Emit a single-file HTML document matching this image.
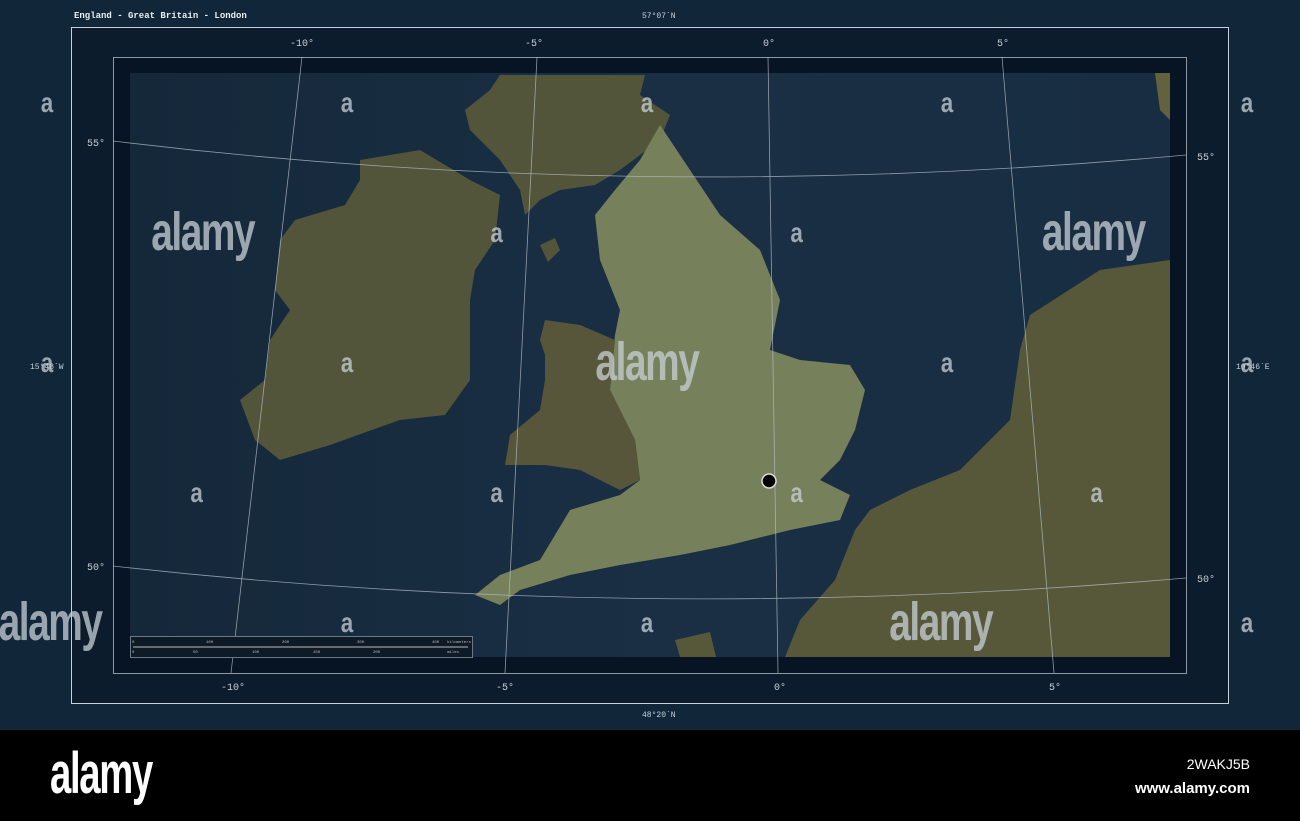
<!DOCTYPE html>
<html><head><meta charset="utf-8"><style>
html,body{margin:0;padding:0;width:1300px;height:821px;overflow:hidden;background:#12263a;font-family:"Liberation Mono",monospace}
svg{position:absolute;left:0;top:0}
</style></head><body>
<svg width="1300" height="821" viewBox="0 0 1300 821" xmlns="http://www.w3.org/2000/svg">
<defs>
<linearGradient id="sea" x1="0" y1="0" x2="1" y2="0"><stop offset="0" stop-color="#15283a"/><stop offset="0.5" stop-color="#1a2f44"/><stop offset="1" stop-color="#182d42"/></linearGradient>
</defs>
<rect width="1300" height="730" fill="#12263a"/>
<rect x="71.5" y="27.5" width="1157" height="676" fill="#0c1c2c" stroke="#c8d0d8" stroke-width="1"/>
<rect x="113.5" y="57.5" width="1073" height="616" fill="#061424" stroke="#8c98a4" stroke-width="1"/>
<rect x="130" y="73" width="1040" height="584" fill="url(#sea)"/>
<g stroke="none">
<polygon fill="#52553a" points="500,75 645,75 640,95 670,115 660,140 620,170 595,185 560,190 540,200 525,215 520,190 500,160 470,130 465,110 490,90"/>
<polygon fill="#76805a" points="660,125 690,170 720,215 760,250 780,300 770,350 800,360 850,365 865,390 855,430 840,460 820,480 850,495 840,520 790,530 730,545 680,555 620,565 570,575 520,590 500,605 475,595 500,575 540,560 570,510 620,495 640,480 635,440 610,390 615,335 620,310 600,260 595,215 615,190 640,160"/>
<polygon fill="#58563a" points="545,320 580,325 615,340 610,390 635,440 640,480 620,490 580,470 545,465 505,465 510,435 540,410 545,380 545,355 540,340"/>
<polygon fill="#53553a" points="360,160 420,150 470,180 500,195 495,240 475,270 470,300 470,330 470,380 445,415 400,420 330,445 280,460 255,440 240,400 265,380 270,340 290,310 275,290 280,240 295,220 345,205 360,180"/>
<polygon fill="#57583a" points="1170,260 1100,270 1030,315 1020,350 1010,420 960,470 910,490 870,510 855,530 835,580 800,620 785,657 1170,657"/>
<polygon fill="#52553a" points="540,245 555,238 560,250 548,262"/>
<polygon fill="#57583a" points="675,640 710,632 716,657 680,657"/>
<polygon fill="#62623f" points="1155,73 1170,73 1170,120 1160,110"/>
</g>
<g stroke="#b8c2cc" stroke-width="0.8" fill="none" opacity="0.75">
<path d="M113,141 Q640,205 1186,155"/>
<path d="M113,566 Q640,625 1186,578"/>
<path d="M302,57 L231,673"/>
<path d="M537,57 L505,673"/>
<path d="M768,57 L778,673"/>
<path d="M1002,57 L1054,673"/>
</g>
<circle cx="769" cy="481" r="7" fill="#000" stroke="#ddd" stroke-width="1.5"/>
<rect x="130.5" y="636.5" width="342" height="21" fill="#0e1a26" stroke="#6c7884" stroke-width="1"/>
<line x1="133" y1="647" x2="468" y2="647" stroke="#bbb" stroke-width="1"/>
<g font-family="Liberation Mono" font-size="4" fill="#bbb"><text x="132" y="643">0</text><text x="206" y="643">100</text><text x="282" y="643">200</text><text x="357" y="643">300</text><text x="432" y="643">400</text><text x="447" y="643">kilometers</text><text x="132" y="653">0</text><text x="193" y="653">50</text><text x="252" y="653">100</text><text x="313" y="653">150</text><text x="373" y="653">200</text><text x="447" y="653">miles</text></g>
<g font-family="Liberation Mono" font-size="10" fill="#c8d0d8">
<text x="74" y="18" font-size="9" font-weight="bold" fill="#e8eef2">England - Great Britain - London</text>
<text x="642" y="18" font-size="8">57°07´N</text>
<text x="642" y="717" font-size="8">48°20´N</text>
<text x="30" y="369" font-size="8">15°48´W</text>
<text x="1236" y="369" font-size="8">10°46´E</text>
<text x="290" y="46">-10°</text><text x="525" y="46">-5°</text><text x="763" y="46">0°</text><text x="997" y="46">5°</text>
<text x="221" y="690">-10°</text><text x="496" y="690">-5°</text><text x="774" y="690">0°</text><text x="1049" y="690">5°</text>
<text x="87" y="146">55°</text><text x="87" y="570">50°</text>
<text x="1197" y="160">55°</text><text x="1197" y="582">50°</text>
</g>
<g font-family="Liberation Sans" font-weight="bold" fill="#c8d0d6" opacity="0.75">
<g font-size="28" transform="scale(0.8,1)"><text x="51" y="112">a</text><text x="426" y="112">a</text><text x="801" y="112">a</text><text x="1176" y="112">a</text><text x="1551" y="112">a</text>
<text x="613" y="242">a</text><text x="988" y="242">a</text>
<text x="51" y="372">a</text><text x="426" y="372">a</text><text x="1176" y="372">a</text><text x="1551" y="372">a</text>
<text x="238" y="502">a</text><text x="613" y="502">a</text><text x="988" y="502">a</text><text x="1363" y="502">a</text>
<text x="426" y="632">a</text><text x="801" y="632">a</text><text x="1551" y="632">a</text></g>
<g font-size="54" letter-spacing="-2" transform="scale(0.72,1)"><text x="210" y="250">alamy</text><text x="1447" y="250">alamy</text><text x="827" y="380">alamy</text><text x="-2" y="640">alamy</text><text x="1235" y="640">alamy</text></g>
</g>
<rect x="0" y="730" width="1300" height="91" fill="#000"/>
<text x="0" y="793" font-family="Liberation Sans" font-weight="bold" font-size="58" fill="#fff" letter-spacing="-2" transform="translate(50,0) scale(0.66,1)">alamy</text>
<text x="1250" y="769" text-anchor="end" font-family="Liberation Sans" font-size="14" fill="#fff">2WAKJ5B</text>
<text x="1250" y="793" text-anchor="end" font-family="Liberation Sans" font-weight="bold" font-size="15" fill="#fff">www.alamy.com</text>
</svg>
</body></html>
